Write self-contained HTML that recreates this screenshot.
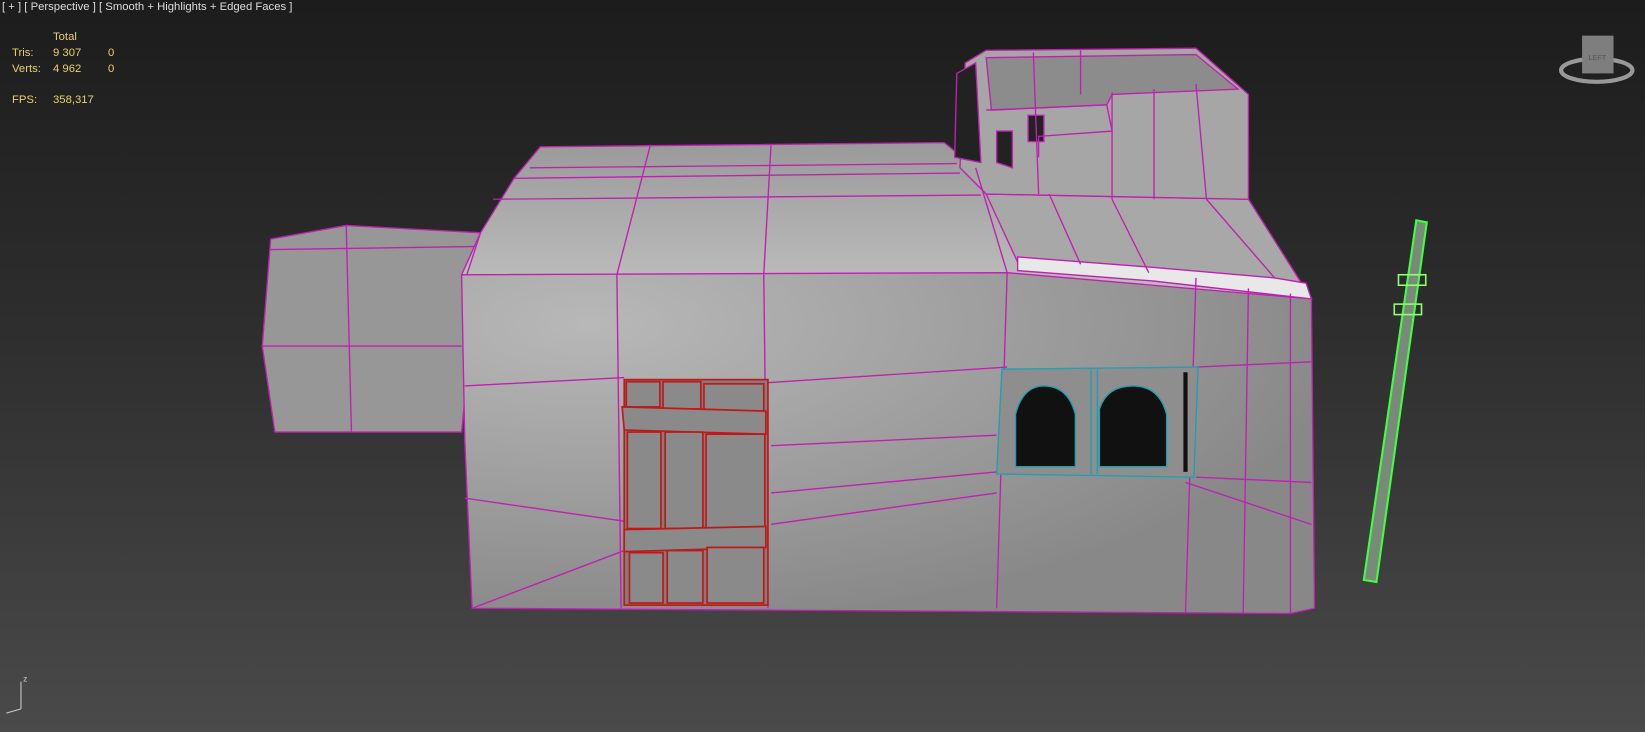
<!DOCTYPE html>
<html><head><meta charset="utf-8"><style>
html,body{margin:0;padding:0;width:1645px;height:732px;overflow:hidden;background:#333}
.t{position:absolute;font-family:"Liberation Sans",sans-serif;font-size:11.3px;white-space:pre}
</style></head><body>
<svg width="1645" height="732" viewBox="0 0 1568 698" preserveAspectRatio="none" style="position:absolute;left:0;top:0">
<defs>
<linearGradient id="bg" x1="0" y1="0" x2="0" y2="1"><stop offset="0" stop-color="#1c1c1c"/><stop offset="0.5" stop-color="#303030"/><stop offset="1" stop-color="#4a4a4a"/></linearGradient>
<radialGradient id="wall" cx="0.15" cy="0.15" r="0.9"><stop offset="0" stop-color="#b8b8b8"/><stop offset="1" stop-color="#888"/></radialGradient>
<linearGradient id="top" x1="0" y1="0" x2="0" y2="1"><stop offset="0" stop-color="#9a9a9a"/><stop offset="1" stop-color="#c0c0c0"/></linearGradient>
</defs>
<rect width="1568" height="698" fill="url(#bg)"/>
<g stroke="#c020b0" stroke-width="1.3" fill="none">
<polygon points="258,228 330,215 458,222 440,412 262,412 250,330" fill="#979797"/>
<line x1="330" y1="215" x2="335" y2="412"/><line x1="250" y1="330" x2="440" y2="330"/><line x1="258" y1="238" x2="458" y2="235"/>
<polygon points="515,140 900,136 930,160 940,185 1190,190 1250,285 440,262 458,222 490,170" fill="url(#top)"/>
<polygon points="440,262 960,260 1250,285 1253,580 1230,585 450,580 443,420" fill="url(#wall)"/>
<polygon points="940,185 1190,190 1250,285 1100,268 970,250" fill="#a8a8a8"/>
<polygon points="970,245 1100,255 1215,265 1245,270 1250,285 1100,268 970,258" fill="#e8e8e8"/>
<polygon points="920,60 940,48 1140,46 1190,90 1190,190 940,185 915,160" fill="#a6a6a6"/>
<polygon points="940,55 1140,52 1180,85 1060,90 1055,100 945,105" fill="#8c8c8c"/>
<polygon points="912,70 930,60 935,155 910,150" fill="#222"/>
<polygon points="950,125 965,125 965,160 950,155" fill="#222"/>
<polygon points="980,110 995,110 995,135 980,135" fill="#222"/>
<polyline points="940,105 1055,100 1060,125 990,130 990,150"/>
<line x1="1060" y1="88" x2="1060" y2="190"/><line x1="1100" y1="85" x2="1100" y2="190"/><line x1="1140" y1="80" x2="1150" y2="190"/><line x1="985" y1="50" x2="990" y2="185"/><line x1="1030" y1="48" x2="1030" y2="90"/>
<line x1="445" y1="262" x2="458" y2="222"/><line x1="490" y1="170" x2="915" y2="165"/><line x1="505" y1="160" x2="912" y2="156"/><line x1="470" y1="190" x2="935" y2="186"/>
<line x1="620" y1="138" x2="588" y2="262"/><line x1="735" y1="137" x2="728" y2="262"/><line x1="930" y1="160" x2="960" y2="260"/>
<line x1="1000" y1="185" x2="1030" y2="252"/><line x1="1060" y1="190" x2="1095" y2="260"/><line x1="1150" y1="190" x2="1215" y2="265"/>
<line x1="588" y1="262" x2="592" y2="580"/><line x1="728" y1="262" x2="732" y2="580"/><line x1="960" y1="260" x2="950" y2="580"/><line x1="1140" y1="265" x2="1130" y2="585"/><line x1="1190" y1="275" x2="1185" y2="585"/><line x1="1230" y1="280" x2="1230" y2="585"/>
<line x1="443" y1="368" x2="595" y2="360"/><line x1="730" y1="365" x2="960" y2="350"/><line x1="1140" y1="350" x2="1250" y2="345"/>
<line x1="443" y1="475" x2="595" y2="497"/><line x1="735" y1="470" x2="950" y2="450"/><line x1="1140" y1="455" x2="1250" y2="460"/>
<line x1="450" y1="580" x2="595" y2="525"/><line x1="735" y1="500" x2="950" y2="470"/><line x1="1130" y1="460" x2="1250" y2="500"/>
<line x1="735" y1="425" x2="950" y2="415"/>
</g>
<g stroke="#c01818" stroke-width="1.6">
<rect x="595" y="362" width="137" height="215" fill="#7e7e7e"/>
<rect x="597" y="364" width="32" height="24" fill="#8a8a8a"/><rect x="632" y="364" width="36" height="26" fill="#8a8a8a"/><rect x="671" y="366" width="57" height="26" fill="#8a8a8a"/>
<polygon points="593,388 730,392 730,414 595,410" fill="#8a8a8a"/>
<rect x="598" y="412" width="32" height="92" fill="#8a8a8a"/><rect x="634" y="412" width="36" height="92" fill="#8a8a8a"/><rect x="673" y="414" width="56" height="90" fill="#8a8a8a"/>
<polygon points="595,505 730,502 730,522 595,526" fill="#8a8a8a"/>
<rect x="600" y="527" width="32" height="48" fill="#8a8a8a"/><rect x="636" y="525" width="34" height="50" fill="#8a8a8a"/><rect x="674" y="522" width="54" height="53" fill="#8a8a8a"/>
</g>
<g stroke="#20a0b0" stroke-width="1.3">
<polygon points="955,352 1142,350 1138,455 950,452" fill="#8e8e8e"/>
<path d="M968,445 L968,395 Q975,368 995,368 Q1018,368 1025,395 L1025,445 Z" fill="#111"/>
<path d="M1048,445 L1048,390 Q1055,368 1080,368 Q1105,368 1112,395 L1112,445 Z" fill="#111"/>
<line x1="1040" y1="352" x2="1040" y2="452"/><line x1="1046" y1="352" x2="1046" y2="452"/><line x1="1130" y1="355" x2="1130" y2="450" stroke-width="4" stroke="#111"/>
</g>
<polygon points="1350,210 1360,212 1312,555 1300,553" fill="#7a8a7a" stroke="#40ff40" stroke-width="2"/>
<g stroke="#90ff70" stroke-width="1.5" fill="none"><rect x="1333" y="262" width="26" height="10"/><rect x="1329" y="290" width="26" height="10"/></g>
<ellipse cx="1522" cy="67" rx="34" ry="11" fill="none" stroke="#999" stroke-width="4"/>
<ellipse cx="1522" cy="67" rx="26" ry="7" fill="none" stroke="#222" stroke-width="2"/>
<rect x="1508" y="34" width="30" height="36" fill="#7e7e7e"/>
<text x="1514" y="57" font-family="Liberation Sans" font-size="7" fill="#555">LEFT</text>
<g stroke="#ccc" stroke-width="1"><line x1="20" y1="676" x2="20" y2="650"/><line x1="20" y1="676" x2="6" y2="680"/></g>
<text x="22" y="650" font-family="Liberation Sans" font-size="8" fill="#ccc">z</text>
</svg>
<div class="t" style="left:2px;top:1px;color:#ddd">[ + ] [ Perspective ] [ Smooth + Highlights + Edged Faces ]</div>
<div class="t" style="left:53px;top:31px;color:#e8d070">Total</div>
<div class="t" style="left:12px;top:47px;color:#e8d070">Tris:</div><div class="t" style="left:53px;top:47px;color:#e8d070">9 307</div><div class="t" style="left:108px;top:47px;color:#e8d070">0</div>
<div class="t" style="left:12px;top:63px;color:#e8d070">Verts:</div><div class="t" style="left:53px;top:63px;color:#e8d070">4 962</div><div class="t" style="left:108px;top:63px;color:#e8d070">0</div>
<div class="t" style="left:12px;top:94px;color:#e8d070">FPS:</div><div class="t" style="left:53px;top:94px;color:#e8d070">358,317</div>
</body></html>
